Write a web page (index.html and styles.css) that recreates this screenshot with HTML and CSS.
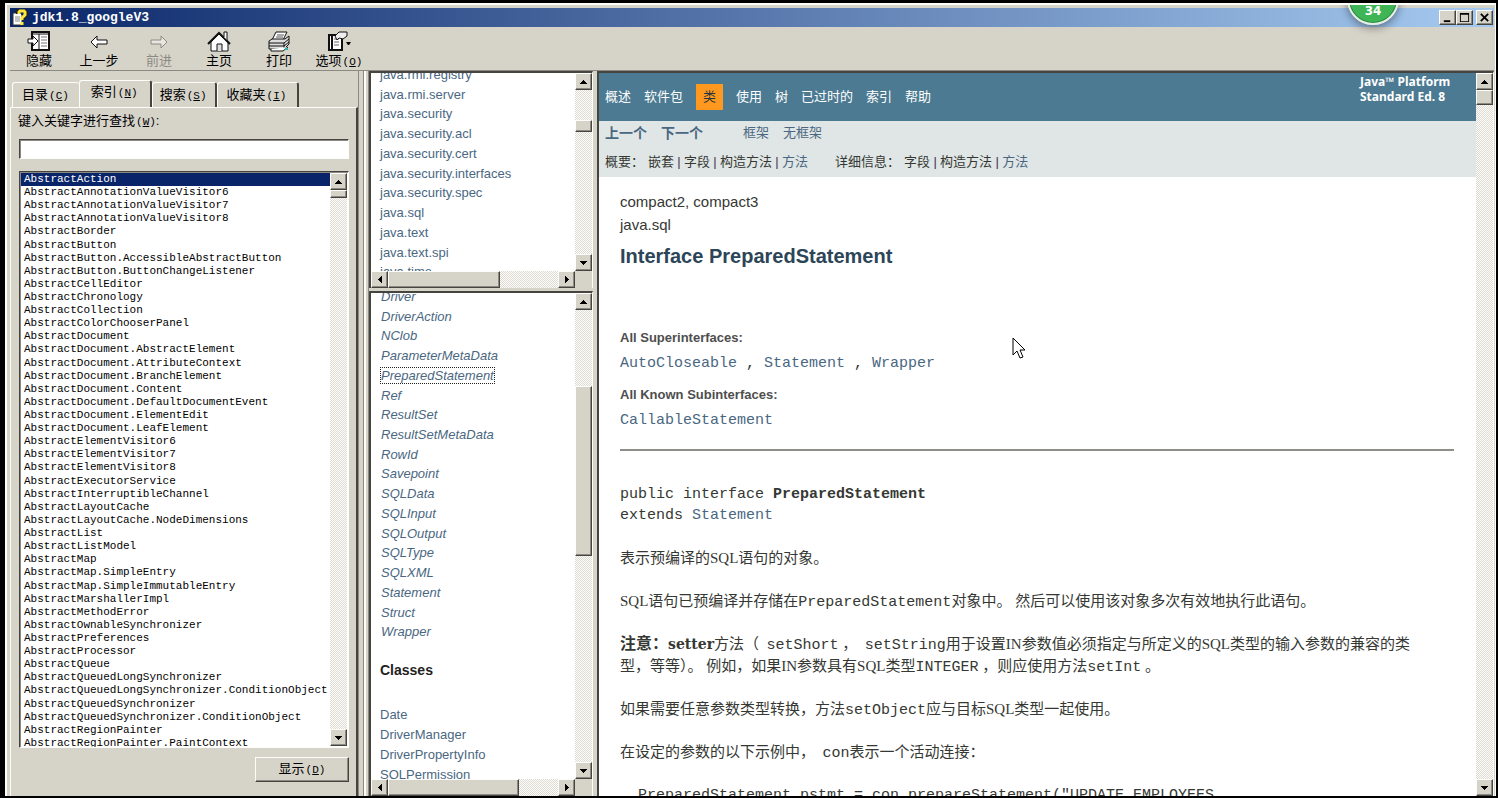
FILE: index.html
```html
<!DOCTYPE html>
<html lang="zh-CN">
<head>
<meta charset="utf-8">
<title>jdk1.8_googleV3</title>
<link rel="stylesheet" href="styles.css">
</head>
<body>
<svg class="symbols" aria-hidden="true">
  <symbol id="up" viewBox="0 0 7 4"><path d="M3 0h1v1h1v1h1v1h1v1H0V3h1V2h1V1h1z"/></symbol>
  <symbol id="down" viewBox="0 0 7 4"><path d="M0 0h7v1H6v1H5v1H4v1H3V3H2V2H1V1H0z"/></symbol>
  <symbol id="left" viewBox="0 0 4 7"><path d="M4 0v7H3V6H2V5H1V4H0V3h1V2h1V1h1V0z"/></symbol>
  <symbol id="right" viewBox="0 0 4 7"><path d="M0 0v7h1V6h1V5h1V4h1V3H3V2H2V1H1V0z"/></symbol>
</svg>
<div class="window">
  <header class="titlebar">
    <svg class="app-icon" viewBox="0 0 16 17"><path d="M1 4h7l2 2v10H1z" fill="#fff" stroke="#333"/><path d="M3 8h5M3 10h5M3 12h5" stroke="#888"/><path d="M6 5V2l2-1h4l2 2v3l-3 3v2" fill="none" stroke="#222" stroke-width="4"/><path d="M7 5V3l1-1h4l1 1v3l-3 3v2M10 13v3" fill="none" stroke="#ffe83c" stroke-width="3"/></svg>
    <h1 class="title">jdk1.8_googleV3</h1>
    <div class="window-buttons">
      <button class="raised" aria-label="最小化"><svg viewBox="0 0 12 12"><path d="M2 9h7v2H2z"/></svg></button>
      <button class="raised" aria-label="最大化"><svg viewBox="0 0 12 12"><path d="M1 1h10v10H1zM2 3v7h8V3z" fill-rule="evenodd"/></svg></button>
      <button class="raised close" aria-label="关闭"><svg viewBox="0 0 12 12"><path d="M2 2l8 8M10 2l-8 8" stroke="#000" stroke-width="2"/></svg></button>
    </div>
  </header>

  <nav class="toolbar">
    <button><svg viewBox="0 0 24 22"><path d="M5 1h17v18H5z" fill="#fff" stroke="#111" stroke-width="2"/><path d="M5 3h17M12 3v16" stroke="#111"/><path d="M14 6h6M14 9h6M14 12h6M14 15h6" stroke="#777"/><path d="M1 8h5V5l5 5-5 5v-3H1z" fill="#fff" stroke="#111"/></svg>隐藏</button>
    <button><svg viewBox="0 0 24 22"><path d="M4 11l6-6v4h10v4H10v4z" fill="#fff" stroke="#111"/></svg>上一步</button>
    <button disabled><svg viewBox="0 0 24 22"><path d="M20 11l-6-6v4H4v4h10v4z" fill="#e8e6e0" stroke="#8c8a84"/></svg>前进</button>
    <button><svg viewBox="0 0 24 22"><path d="M4 11v9h17v-9L12 3z" fill="#fff" stroke="#111"/><path d="M1 13L12 2l11 11" fill="none" stroke="#111" stroke-width="2"/><path d="M17 6V1h3v8" fill="#fff" stroke="#111"/><path d="M10 20v-7h5v7" fill="#ddd" stroke="#111"/></svg>主页</button>
    <button><svg viewBox="0 0 24 22"><path d="M5 9l4-8h11l-4 8z" fill="#fff" stroke="#111"/><path d="M10 4h7M9 6h7" stroke="#555"/><path d="M2 10l3-2h13l4-3v8l-5 5H2z" fill="#ddd" stroke="#111"/><path d="M2 12h15l5-4M2 15h15l5-4M17 12v6" fill="none" stroke="#111"/><path d="M4 18v2h12l5-4" fill="#fff" stroke="#111"/><path d="M18 18h3" stroke="#28b8b0" stroke-width="2"/></svg>打印</button>
    <button><svg viewBox="0 0 24 22"><path d="M2 4h13v15H2z" fill="#fff" stroke="#111" stroke-width="2"/><path d="M5 4v15" stroke="#111" stroke-width="2"/><path d="M7 8h5M7 11h5M7 14h5" stroke="#666"/><path d="M8 5l4-4h8v4l-4 3-4-1-2 2z" fill="#eee" stroke="#111"/><path d="M19 11h5l-2 3h-1z"/></svg><span>选项<span class="key">(<u>O</u>)</span></span></button>
  </nav>

  <div class="workspace">
    <aside class="finder">
      <div class="tabs" role="tablist">
        <button role="tab">目录<span class="key">(<u>C</u>)</span></button>
        <button role="tab" class="active" aria-selected="true">索引<span class="key">(<u>N</u>)</span></button>
        <button role="tab">搜索<span class="key">(<u>S</u>)</span></button>
        <button role="tab">收藏夹<span class="key">(<u>I</u>)</span></button>
      </div>
      <div class="tab-page">
        <label for="keyword">键入关键字进行查找<span class="key">(<u>W</u>)</span>:</label>
        <input id="keyword" class="sunken keyword" type="text">
        <div class="sunken index-box">
          <ul class="index-list" role="listbox">
            <li class="selected">AbstractAction</li>
            <li>AbstractAnnotationValueVisitor6</li>
            <li>AbstractAnnotationValueVisitor7</li>
            <li>AbstractAnnotationValueVisitor8</li>
            <li>AbstractBorder</li>
            <li>AbstractButton</li>
            <li>AbstractButton.AccessibleAbstractButton</li>
            <li>AbstractButton.ButtonChangeListener</li>
            <li>AbstractCellEditor</li>
            <li>AbstractChronology</li>
            <li>AbstractCollection</li>
            <li>AbstractColorChooserPanel</li>
            <li>AbstractDocument</li>
            <li>AbstractDocument.AbstractElement</li>
            <li>AbstractDocument.AttributeContext</li>
            <li>AbstractDocument.BranchElement</li>
            <li>AbstractDocument.Content</li>
            <li>AbstractDocument.DefaultDocumentEvent</li>
            <li>AbstractDocument.ElementEdit</li>
            <li>AbstractDocument.LeafElement</li>
            <li>AbstractElementVisitor6</li>
            <li>AbstractElementVisitor7</li>
            <li>AbstractElementVisitor8</li>
            <li>AbstractExecutorService</li>
            <li>AbstractInterruptibleChannel</li>
            <li>AbstractLayoutCache</li>
            <li>AbstractLayoutCache.NodeDimensions</li>
            <li>AbstractList</li>
            <li>AbstractListModel</li>
            <li>AbstractMap</li>
            <li>AbstractMap.SimpleEntry</li>
            <li>AbstractMap.SimpleImmutableEntry</li>
            <li>AbstractMarshallerImpl</li>
            <li>AbstractMethodError</li>
            <li>AbstractOwnableSynchronizer</li>
            <li>AbstractPreferences</li>
            <li>AbstractProcessor</li>
            <li>AbstractQueue</li>
            <li>AbstractQueuedLongSynchronizer</li>
            <li>AbstractQueuedLongSynchronizer.ConditionObject</li>
            <li>AbstractQueuedSynchronizer</li>
            <li>AbstractQueuedSynchronizer.ConditionObject</li>
            <li>AbstractRegionPainter</li>
            <li>AbstractRegionPainter.PaintContext</li>
          </ul>
          <div class="scroll vertical">
            <button class="raised" aria-label="向上"><svg class="tall"><use href="#up"/></svg></button>
            <div class="thumb raised index-thumb"></div>
            <button class="raised end" aria-label="向下"><svg class="tall"><use href="#down"/></svg></button>
          </div>
        </div>
        <button class="raised show">显示<span class="key">(<u>D</u>)</span></button>
      </div>
    </aside>
    <div class="splitter"></div>

    <div class="side-frames">
      <section class="frame packages">
        <div class="list-view">
          <ul class="links package-links">
            <li><a href="#">java.rmi.registry</a></li>
            <li><a href="#">java.rmi.server</a></li>
            <li><a href="#">java.security</a></li>
            <li><a href="#">java.security.acl</a></li>
            <li><a href="#">java.security.cert</a></li>
            <li><a href="#">java.security.interfaces</a></li>
            <li><a href="#">java.security.spec</a></li>
            <li><a href="#">java.sql</a></li>
            <li><a href="#">java.text</a></li>
            <li><a href="#">java.text.spi</a></li>
            <li><a href="#">java.time</a></li>
          </ul>
        </div>
        <div class="scroll vertical">
          <button class="raised" aria-label="向上"><svg class="tall"><use href="#up"/></svg></button>
          <div class="thumb raised package-thumb"></div>
          <button class="raised end" aria-label="向下"><svg class="tall"><use href="#down"/></svg></button>
        </div>
        <div class="scroll horizontal">
          <button class="raised" aria-label="向左"><svg class="wide"><use href="#left"/></svg></button>
          <div class="thumb raised package-hthumb"></div>
          <button class="raised end" aria-label="向右"><svg class="wide"><use href="#right"/></svg></button>
        </div>
      </section>
      <section class="frame types">
        <div class="list-view">
          <ul class="links interface-links">
            <li><a href="#">Driver</a></li>
            <li><a href="#">DriverAction</a></li>
            <li><a href="#">NClob</a></li>
            <li><a href="#">ParameterMetaData</a></li>
            <li><a href="#" class="focused">PreparedStatement</a></li>
            <li><a href="#">Ref</a></li>
            <li><a href="#">ResultSet</a></li>
            <li><a href="#">ResultSetMetaData</a></li>
            <li><a href="#">RowId</a></li>
            <li><a href="#">Savepoint</a></li>
            <li><a href="#">SQLData</a></li>
            <li><a href="#">SQLInput</a></li>
            <li><a href="#">SQLOutput</a></li>
            <li><a href="#">SQLType</a></li>
            <li><a href="#">SQLXML</a></li>
            <li><a href="#">Statement</a></li>
            <li><a href="#">Struct</a></li>
            <li><a href="#">Wrapper</a></li>
          </ul>
          <h2>Classes</h2>
          <ul class="links">
            <li><a href="#">Date</a></li>
            <li><a href="#">DriverManager</a></li>
            <li><a href="#">DriverPropertyInfo</a></li>
            <li><a href="#">SQLPermission</a></li>
          </ul>
        </div>
        <div class="scroll vertical">
          <button class="raised" aria-label="向上"><svg class="tall"><use href="#up"/></svg></button>
          <div class="thumb raised type-thumb"></div>
          <button class="raised end" aria-label="向下"><svg class="tall"><use href="#down"/></svg></button>
        </div>
        <div class="scroll horizontal">
          <button class="raised" aria-label="向左"><svg class="wide"><use href="#left"/></svg></button>
          <div class="thumb raised type-hthumb"></div>
          <button class="raised end" aria-label="向右"><svg class="wide"><use href="#right"/></svg></button>
        </div>
      </section>
    </div>

    <section class="frame doc-frame">
      <main class="doc">
        <div class="doc-header">
          <ul class="doc-nav">
            <li><a href="#">概述</a></li>
            <li><a href="#">软件包</a></li>
            <li class="current">类</li>
            <li><a href="#">使用</a></li>
            <li><a href="#">树</a></li>
            <li><a href="#">已过时的</a></li>
            <li><a href="#">索引</a></li>
            <li><a href="#">帮助</a></li>
          </ul>
          <strong class="platform">Java™ Platform<br>Standard Ed. 8</strong>
        </div>
        <div class="sub-nav">
          <div class="sub-row pages">
            <a href="#"><b>上一个</b></a><a href="#"><b>下一个</b></a>
            <a href="#" class="apart">框架</a><a href="#">无框架</a>
          </div>
          <div class="sub-row">
            <span class="group">概要：</span><span>嵌套</span><i>|</i><span>字段</span><i>|</i><span>构造方法</span><i>|</i><a href="#">方法</a>
            <span class="group second">详细信息：</span><span>字段</span><i>|</i><span>构造方法</span><i>|</i><a href="#">方法</a>
          </div>
        </div>
        <article class="content">
          <div class="profile">compact2, compact3</div>
          <div class="profile">java.sql</div>
          <h2>Interface PreparedStatement</h2>
          <dl>
            <dt>All Superinterfaces:</dt>
            <dd><a href="#">AutoCloseable</a> , <a href="#">Statement</a> , <a href="#">Wrapper</a></dd>
            <dt>All Known Subinterfaces:</dt>
            <dd><a href="#">CallableStatement</a></dd>
          </dl>
          <hr>
          <pre class="signature">public interface <b>PreparedStatement</b>
extends <a href="#">Statement</a></pre>
          <div class="description">
            <p>表示预编译的SQL语句的对象。</p>
            <p>SQL语句已预编译并存储在<code>PreparedStatement</code>对象中。 然后可以使用该对象多次有效地执行此语句。</p>
            <p><b>注意：<span class="latin">setter</span></b>方法（&nbsp; <code>setShort</code> ，&nbsp; <code>setString</code>用于设置IN参数值必须指定与所定义的SQL类型的输入参数的兼容的类型，等等）。 例如，如果IN参数具有SQL类型<code>INTEGER</code> ，则应使用方法<code>setInt</code> 。</p>
            <p>如果需要任意参数类型转换，方法<code>setObject</code>应与目标SQL类型一起使用。</p>
            <p>在设定的参数的以下示例中，&nbsp; <code>con</code>表示一个活动连接：</p>
          </div>
          <pre class="example">  PreparedStatement pstmt = con.prepareStatement("UPDATE EMPLOYEES</pre>
        </article>
      </main>
      <div class="scroll vertical">
        <button class="raised" aria-label="向上"><svg class="tall"><use href="#up"/></svg></button>
        <div class="thumb raised doc-thumb"></div>
        <button class="raised end" aria-label="向下"><svg class="tall"><use href="#down"/></svg></button>
      </div>
    </section>
  </div>

  <div class="counter">34</div>
  <svg class="cursor" viewBox="0 0 14 22"><path d="M1 1v17l4-4 3 7 3-1-3-7h5z" fill="#fff" stroke="#000"/></svg>
</div>
</body>
</html>
```
FILE: styles.css
```css
:root {
  --face: #d6d3c9;
  --light: #fdfdfa;
  --shade: #8b8982;
  --dark: #45443f;
  --link: #4a6782;
  --ui: "Liberation Mono", "Noto Sans CJK SC", monospace;
  --sans: "Liberation Sans", "Noto Sans CJK SC", sans-serif;
}

* { box-sizing: border-box; }

body {
  margin: 0;
  height: 100vh;
  padding: 3px 2px 2px 5px;
  overflow: hidden;
  background: #000;
  font: 13px/16px var(--sans);
}

ul, dl, dd, h1, h2, p, pre { margin: 0; padding: 0; }
ul { list-style: none; }
a { color: var(--link); text-decoration: none; }
button { margin: 0; padding: 0; border: 0; background: none; font: inherit; color: #000; }
.symbols { position: absolute; width: 0; height: 0; }

.window {
  position: relative;
  height: 100%;
  padding: 3px 1px 0 3px;
  border: solid var(--light);
  border-width: 2px 1px 0 2px;
  background: var(--face);
  display: flex;
  flex-direction: column;
  overflow: hidden;
}

.raised {
  background: var(--face);
  border: 1px solid;
  border-color: var(--light) var(--dark) var(--dark) var(--light);
  box-shadow: inset -1px -1px var(--shade);
}

.sunken {
  background: #fff;
  border: 1px solid;
  border-color: var(--dark) var(--light) var(--light) var(--dark);
  box-shadow: inset 1px 1px var(--shade);
}

/* Title bar */
.titlebar {
  flex: none;
  height: 19px;
  padding: 0 1px 0 2px;
  display: flex;
  align-items: center;
  background: linear-gradient(90deg, #0a2669, #a6caf0);
}
.app-icon { width: 16px; height: 17px; }
.title { flex: 1; padding-left: 4px; color: #fff; font: bold 13px/18px var(--ui); }
.window-buttons { display: flex; }
.window-buttons button { width: 17px; height: 15px; display: grid; place-items: center; }
.window-buttons svg { width: 11px; height: 11px; }
.window-buttons .close { margin-left: 3px; }

/* Toolbar */
.toolbar {
  flex: none;
  height: 44px;
  padding-top: 4px;
  border-bottom: 1px solid var(--shade);
  display: flex;
}
.toolbar button {
  width: 60px;
  padding-right: 2px;
  display: flex;
  flex-direction: column;
  align-items: center;
  line-height: 16px;
  white-space: nowrap;
}
.toolbar svg { width: 24px; height: 22px; }
.toolbar button:disabled { color: #8c8a84; }
.key { margin-left: 1px; font: 11px/16px "Liberation Mono", monospace; }

.workspace { flex: 1; min-height: 0; display: flex; }

/* Index pane */
.finder { width: 348px; padding-top: 9px; display: flex; flex-direction: column; }
.tabs { display: flex; align-items: flex-end; padding-left: 2px; }
.tabs button {
  height: 25px;
  padding: 0 9px;
  border: solid;
  border-width: 1px 2px 0 1px;
  border-color: var(--light) var(--dark) var(--light) var(--light);
  border-radius: 3px 3px 0 0;
  white-space: nowrap;
}
.tabs button:first-child { border-right: 0; padding-right: 10px; }
.tabs .active { height: 27px; padding: 0 12px 3px 11px; }
.tabs button:not(.active):not(:first-child) { padding: 0 8px 0 7px; }
.tabs button:last-child:not(.active) { padding: 0 11px 0 9px; }
.tab-page {
  flex: 1;
  min-height: 0;
  padding: 4px 7px 14px 8px;
  border: solid;
  border-width: 1px 2px 0 1px;
  border-color: var(--light) var(--dark) var(--light) var(--light);
  display: flex;
  flex-direction: column;
}
.tab-page label { line-height: 17px; margin-left: -1px; }
.keyword { height: 20px; margin: 9px 0 12px; padding: 0 4px; }
.index-box { flex: 1; min-height: 0; padding: 1px; display: flex; overflow: hidden; }
.index-list {
  flex: 1;
  height: calc(100% + 4px);
  display: grid;
  grid-auto-rows: 1fr;
  font: 11px/13px "Liberation Mono", monospace;
}
.index-list li { padding-left: 3px; white-space: nowrap; min-height: 0; }
.index-list .selected { background: #0a246a; color: #fff; }
.show { align-self: flex-end; width: 94px; height: 25px; margin-top: 9px; }

.splitter {
  width: 11px;
  border: solid var(--shade);
  border-width: 0 1px;
  box-shadow: inset 4px 0 var(--face), inset 5px 0 var(--shade), inset 7px 0 var(--light);
}

/* Scroll bars */
.scroll {
  display: flex;
  background: repeating-conic-gradient(#fdfdfa 0 25%, #dddbd3 0 50%) 0 0 / 2px 2px;
}
.scroll button { flex: none; width: 17px; height: 17px; display: grid; place-items: center; }
.scroll .end { margin: auto 0 0; }
.scroll.vertical { width: 17px; flex-direction: column; }
.scroll.horizontal .end { margin: 0 0 0 auto; }
.tall { width: 7px; height: 4px; }
.wide { width: 4px; height: 7px; }
.index-thumb { height: 8px; }
.package-thumb { height: 12px; margin-top: 30px; }
.type-thumb { height: 170px; margin-top: 76px; }
.doc-thumb { height: 15px; }
.package-hthumb { width: 112px; }
.type-hthumb { width: 131px; }

/* Frames */
.side-frames { width: 224px; display: flex; flex-direction: column; gap: 3px; }
.frame {
  display: grid;
  border: solid;
  border-width: 2px 1px 0 2px;
  border-color: var(--dark) var(--light) var(--light) var(--dark);
  background: #fff;
  overflow: hidden;
}
.side-frames .frame {
  grid-template: minmax(0, 1fr) 17px / minmax(0, 1fr) 17px;
  background: var(--face);
}
.list-view { background: #fff; overflow: hidden; }
.packages { height: 217px; }
.types { flex: 1; min-height: 0; }
.links { padding-left: 9px; line-height: 20px; }
.package-links, .interface-links { display: grid; grid-auto-rows: 1fr; line-height: 19px; }
.package-links { height: 217px; margin-top: -8px; }
.interface-links { height: 355px; margin-top: -6px; padding-left: 10px; font-style: italic; }
.list-view h2 { margin: 18px 9px 25px; font-size: 14px; line-height: 20px; color: #222; }
.focused { outline: 1px dotted #222; }

.doc-frame { flex: 1; min-width: 0; margin-left: 4px; grid-template: minmax(0, 1fr) / minmax(0, 1fr) 17px; }
.doc { overflow: hidden; color: #353833; }
.doc-header {
  height: 48px;
  padding-left: 6px;
  background: #4b7a92;
  display: flex;
  align-items: center;
  justify-content: space-between;
  color: #fff;
}
.doc-nav { display: flex; align-items: center; gap: 13px; }
.doc-nav a { color: #fff; }
.doc-nav .current { padding: 5px 7px; background: #ff981f; color: #253441; }
.platform { width: 116px; align-self: flex-start; padding-top: 1px; font: bold 12px/15px "Noto Sans", sans-serif; }
.sub-nav { height: 56px; padding: 3px 6px 0; background: #e0e6e5; }
.sub-row { display: flex; line-height: 18px; white-space: nowrap; }
.pages { gap: 14px; margin-bottom: 10px; }
.pages b { font-size: 14px; }
.apart { margin-left: 26px; }
.sub-row i { width: 10px; text-align: center; font-style: normal; color: #403050; }
.group { margin-right: 4px; }
.second { margin-left: 27px; }

.content { padding: 13px 22px 0 21px; font-size: 15px; }
.profile { line-height: 23px; }
.content h2 { margin: 8px 0 60px; font-size: 20px; line-height: 24px; color: #2c4557; }
.content dt { font-size: 13px; font-weight: bold; line-height: 20px; color: #4e4e4e; }
.content dd { margin: 5px 0 10px; font: 15px/22px var(--ui); }
.content hr { height: 2px; margin: 17px 0 33px; border: 0; background: #8f8f88; }
pre { font: 15px/21px "Liberation Mono", monospace; }
.description {
  margin-top: 21px;
  padding-right: 30px;
  display: grid;
  gap: 21px;
  font: 15px/22px "Liberation Serif", "Noto Sans CJK SC", serif;
}
.description b { font-size: 16px; line-height: 16px; }
code { font: 15px/15px "Liberation Mono", monospace; }
.description .latin { font: bold 14px/14px "DejaVu Serif", serif; }
.example { margin-top: 22px; }

/* Overlays */
.counter {
  position: absolute;
  top: -32px;
  right: 96px;
  width: 52px;
  height: 52px;
  padding-top: 28px;
  border: 2px solid #e8eee8;
  border-radius: 50%;
  background: #3fb556;
  box-shadow: inset 0 0 0 1px #2c8a40, 0 3px 9px #0006;
  color: #fff;
  font: bold 12px/16px "DejaVu Sans", sans-serif;
  text-align: center;
}
.cursor { position: absolute; left: 1005px; top: 332px; width: 14px; height: 22px; }
```
